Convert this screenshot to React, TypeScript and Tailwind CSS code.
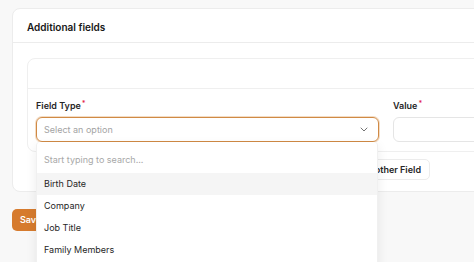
import React from "react";

export default function App() {
  const items = ["Birth Date", "Company", "Job Title", "Family Members"];
  return (
    <div
      className="w-[474px] h-[262px] overflow-hidden bg-[#f8f8f8] pl-3 pt-2"
      style={{ fontFamily: "Inter, 'Noto Sans', sans-serif" }}
    >
      <div className="w-[520px] rounded-[8px] border border-[#ececec] bg-white">
        <div className="h-[34px] flex items-center pt-[3px] px-[14px] border-b border-[#ececec]">
          <span className="text-[10px] font-semibold text-[#171717]">Additional fields</span>
        </div>
        <div className="px-[14px] pt-[15px] pb-[11px]">
          <div className="rounded-[8px] border border-[#efefef]">
            <div className="h-[30px] border-b border-[#efefef]" />
            <div className="px-[8px] pt-[11px] pb-[9px] flex gap-[14px]">
              <div className="w-[343px] shrink-0 relative">
                <div className="text-[9px] font-semibold text-[#262626] h-[17px] leading-[12px]">
                  Field Type
                  <span className="text-[#e11d48] text-[7px] relative top-[-3px] ml-[1px]">*</span>
                </div>
                <div className="h-[25px] rounded-[6px] border border-[#d08a45] ring-1 ring-[#f3dcc4] flex items-center justify-between pl-[7px] pr-[10px]">
                  <span className="text-[9px] text-[#a3a3a3]">Select an option</span>
                  <svg width="8" height="5" viewBox="0 0 8 5" fill="none">
                    <path d="M1 1l3 3 3-3" stroke="#737373" strokeWidth="1" strokeLinecap="round" strokeLinejoin="round" />
                  </svg>
                </div>
                <div className="absolute left-0 top-[42px] w-[342px] h-[140px] z-10 bg-white rounded-t-[4px] border-x border-[#f0f0f0] shadow-[0_4px_12px_rgba(0,0,0,0.08)]">
                  <div className="h-[31px] flex items-center pt-[4px] px-[7px]">
                    <span className="text-[9px] text-[#a8a8a8]">Start typing to search...</span>
                  </div>
                  {items.map((it, i) => (
                    <div
                      key={it}
                      className={
                        "h-[22px] flex items-center px-[7px] text-[9px] text-[#262626] " +
                        (i === 0 ? "bg-[#f5f5f5]" : "")
                      }
                    >
                      {it}
                    </div>
                  ))}
                </div>
              </div>
              <div className="w-[120px] shrink-0">
                <div className="text-[9px] font-semibold text-[#262626] h-[17px] leading-[12px]">
                  Value
                  <span className="text-[#e11d48] text-[7px] relative top-[-3px] ml-[1px]">*</span>
                </div>
                <div className="h-[25px] rounded-[6px] border border-[#e5e5e5]" />
              </div>
            </div>
          </div>
          <div className="flex w-[403px] justify-end pt-[7px]">
            <button className="h-[21px] px-[8px] rounded-[5px] border border-[#ececec] bg-white text-[9px] font-semibold text-[#262626]">
              Add another Field
            </button>
          </div>
        </div>
      </div>
      <div className="flex pt-[17px]">
        <button className="h-[22px] px-[8px] rounded-[5px] bg-[#d67b2e] text-white text-[9px] font-semibold">
          Save
        </button>
      </div>
    </div>
  );
}
